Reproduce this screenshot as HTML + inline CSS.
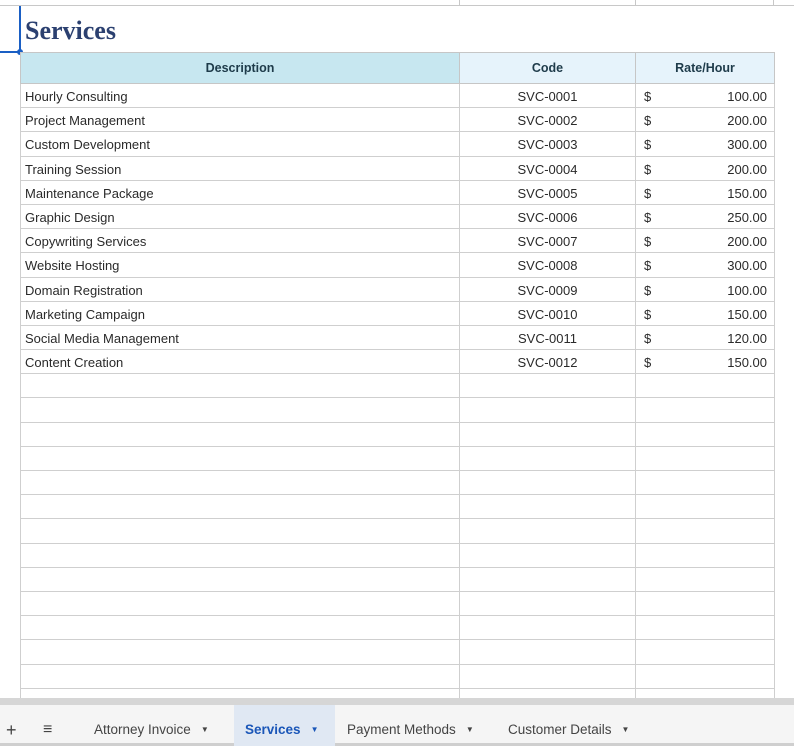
<!DOCTYPE html>
<html><head><style>
*{margin:0;padding:0;box-sizing:border-box}
body{width:794px;height:749px;overflow:hidden;background:#fff;position:relative;font-family:"Liberation Sans",Arial,sans-serif;}
.top{position:absolute;left:0;top:0;width:794px;height:6px;border-bottom:1px solid #c8c8c8;background:#fff}
.top i{position:absolute;top:0;height:6px;border-left:1px solid #c8c8c8}
h1{position:absolute;left:25px;top:16px;font-family:"Liberation Serif",serif;font-size:26px;color:#2b4070;font-weight:bold}
.sel{position:absolute;background:#1a5fc4}
table{position:absolute;left:20px;top:52px;border-collapse:collapse;table-layout:fixed;width:754px}
td{border:1px solid #cfcfcf;height:24.2px;font-size:13px;color:#2a2a2a;padding:2px 4px 0;white-space:nowrap;overflow:hidden}
th{height:31px;border:1px solid #c6c6c6;font-size:12.5px;color:#1e3b4a;font-weight:bold}
th.d{background:#c7e7f0}th.c{background:#e6f3fb}
td.c{text-align:center}
td.r{padding-left:8px;padding-right:7px}
td.r span{float:right}
.sb{position:absolute;left:0;top:698px;width:794px;height:7px;background:#d6d6d6}
.tabs{position:absolute;left:0;top:705px;width:794px;height:41px;background:#f5f5f5;border-bottom:3px solid #cfcfcf;font-size:13.5px;color:#444}
.tabs div{position:absolute;top:0;height:41px;line-height:50px}
.act{background:#e0e8f3;color:#1a56b8;font-weight:bold}
.ar{font-size:8px;margin-left:10px;vertical-align:2px}
</style></head><body>
<div class="top"><i style="left:459px"></i><i style="left:635px"></i><i style="left:773px"></i></div>
<h1>Services</h1>
<div class="sel" style="left:19px;top:6px;width:1.5px;height:46px"></div>
<div class="sel" style="left:0;top:51px;width:20px;height:1.5px"></div>
<div class="sel" style="left:17px;top:49px;width:6px;height:6px;border-radius:50%"></div>
<table>
<colgroup><col style="width:439px"><col style="width:176px"><col style="width:139px"></colgroup>
<tr><th class="d">Description</th><th class="c">Code</th><th class="c">Rate/Hour</th></tr>
<tr><td>Hourly Consulting</td><td class="c">SVC-0001</td><td class="r">$<span>100.00</span></td></tr>
<tr><td>Project Management</td><td class="c">SVC-0002</td><td class="r">$<span>200.00</span></td></tr>
<tr><td>Custom Development</td><td class="c">SVC-0003</td><td class="r">$<span>300.00</span></td></tr>
<tr><td>Training Session</td><td class="c">SVC-0004</td><td class="r">$<span>200.00</span></td></tr>
<tr><td>Maintenance Package</td><td class="c">SVC-0005</td><td class="r">$<span>150.00</span></td></tr>
<tr><td>Graphic Design</td><td class="c">SVC-0006</td><td class="r">$<span>250.00</span></td></tr>
<tr><td>Copywriting Services</td><td class="c">SVC-0007</td><td class="r">$<span>200.00</span></td></tr>
<tr><td>Website Hosting</td><td class="c">SVC-0008</td><td class="r">$<span>300.00</span></td></tr>
<tr><td>Domain Registration</td><td class="c">SVC-0009</td><td class="r">$<span>100.00</span></td></tr>
<tr><td>Marketing Campaign</td><td class="c">SVC-0010</td><td class="r">$<span>150.00</span></td></tr>
<tr><td>Social Media Management</td><td class="c">SVC-0011</td><td class="r">$<span>120.00</span></td></tr>
<tr><td>Content Creation</td><td class="c">SVC-0012</td><td class="r">$<span>150.00</span></td></tr>
<tr><td></td><td></td><td></td></tr><tr><td></td><td></td><td></td></tr>
<tr><td></td><td></td><td></td></tr><tr><td></td><td></td><td></td></tr>
<tr><td></td><td></td><td></td></tr><tr><td></td><td></td><td></td></tr>
<tr><td></td><td></td><td></td></tr><tr><td></td><td></td><td></td></tr>
<tr><td></td><td></td><td></td></tr><tr><td></td><td></td><td></td></tr>
<tr><td></td><td></td><td></td></tr><tr><td></td><td></td><td></td></tr>
<tr><td></td><td></td><td></td></tr><tr><td></td><td></td><td></td></tr>
</table>
<div class="sb"></div>
<div class="tabs">
<div style="left:6px;font-size:18px">+</div>
<div style="left:43px;font-size:16px">≡</div>
<div style="left:94px">Attorney Invoice<span class="ar">▼</span></div>
<div class="act" style="left:234px;width:101px;padding-left:11px">Services<span class="ar">▼</span></div>
<div style="left:347px">Payment Methods<span class="ar">▼</span></div>
<div style="left:508px">Customer Details<span class="ar">▼</span></div>
</div>
</body></html>
